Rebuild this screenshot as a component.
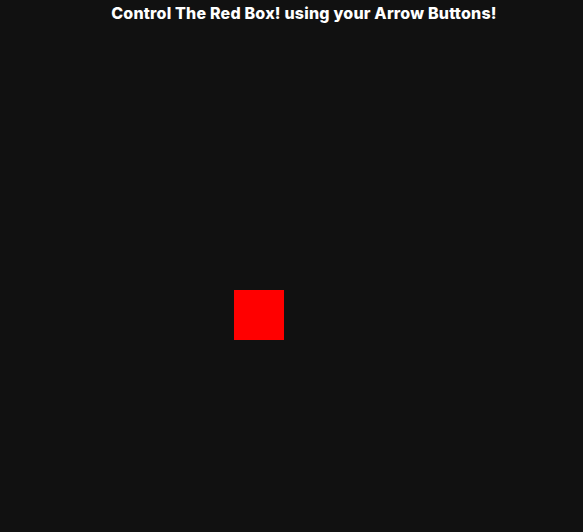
import React from "react";

export default function App() {
  return (
    <div className="relative w-full h-[532px] bg-[#111111] overflow-hidden">
      <h1
        className="pl-[25px] text-center text-white text-[16px] font-extrabold leading-[24px] pt-[1px] tracking-[0.2px]"
        style={{ fontFamily: "Inter, 'Noto Sans', sans-serif" }}
      >
        Control The Red Box! using your Arrow Buttons!
      </h1>
      <div className="absolute left-[234px] top-[290px] w-[50px] h-[50px] bg-[#ff0000]" />
    </div>
  );
}
